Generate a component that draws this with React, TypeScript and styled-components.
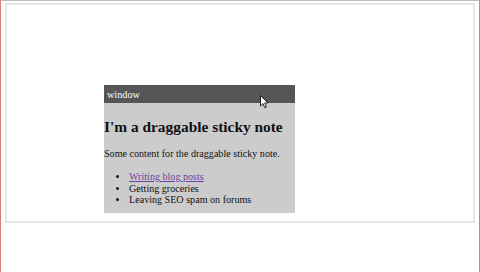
import React from "react";
import styled, { createGlobalStyle } from "styled-components";

const Global = createGlobalStyle`
  html, body { margin: 0; padding: 0; background: #fff; }
  body { font-family: "Liberation Serif", "Times New Roman", serif; color: #111; }
`;

const Frame = styled.div`
  box-sizing: border-box;
  width: 480px;
  height: 272px;
  border-top: 1px solid #bdbdbd;
  border-left: 1px solid #d97a7c;
  border-right: 1px solid #d97a7c;
  padding: 2px 4px 0 4px;
`;

const Canvas = styled.div`
  box-sizing: border-box;
  height: 220px;
  border: 2px solid #e6e6e6;
  padding: 80px 0 0 97px;
  position: relative;
`;

const Note = styled.div`
  width: 191px;
  position: relative;
`;

const TitleBar = styled.div`
  height: 18px;
  background: #555555;
  color: #fff;
  font-size: 10.2px;
  line-height: 19px;
  padding-left: 3px;
`;

const Body = styled.div`
  background: #cccccc;
  padding: 0 0 7px 0;
  overflow: hidden;
`;

const Heading = styled.h1`
  margin: 15px 0 0 0;
  font-size: 15.4px;
  line-height: 18px;
  font-weight: bold;
  color: #111;
`;

const Para = styled.p`
  margin: 11.5px 0 0 0;
  font-size: 10.1px;
  line-height: 11.5px;
`;

const List = styled.ul`
  margin: 12px 0 0 0;
  padding-left: 25px;
  font-size: 10.1px;
  line-height: 11.6px;
`;

const Item = styled.li``;

const Link = styled.a`
  color: #6a3fa0;
  text-decoration: underline;
`;

const Cursor = styled.svg`
  position: absolute;
  left: 156px;
  top: 10px;
  width: 9px;
  height: 14px;
`;

export default function App() {
  return (
    <>
      <Global />
      <Frame>
        <Canvas>
          <Note>
            <TitleBar>window</TitleBar>
            <Body>
              <Heading>I'm a draggable sticky note</Heading>
              <Para>Some content for the draggable sticky note.</Para>
              <List>
                <Item>
                  <Link href="#">Writing blog posts</Link>
                </Item>
                <Item>Getting groceries</Item>
                <Item>Leaving SEO spam on forums</Item>
              </List>
            </Body>
            <Cursor viewBox="0 0 9 14">
              <path
                d="M0.5 0.5 L0.5 11 L3 8.6 L4.8 12.8 L6.4 12.1 L4.7 8 L8 8 Z"
                fill="#fff"
                stroke="#111"
                strokeWidth="0.9"
                strokeLinejoin="round"
              />
            </Cursor>
          </Note>
        </Canvas>
      </Frame>
    </>
  );
}
